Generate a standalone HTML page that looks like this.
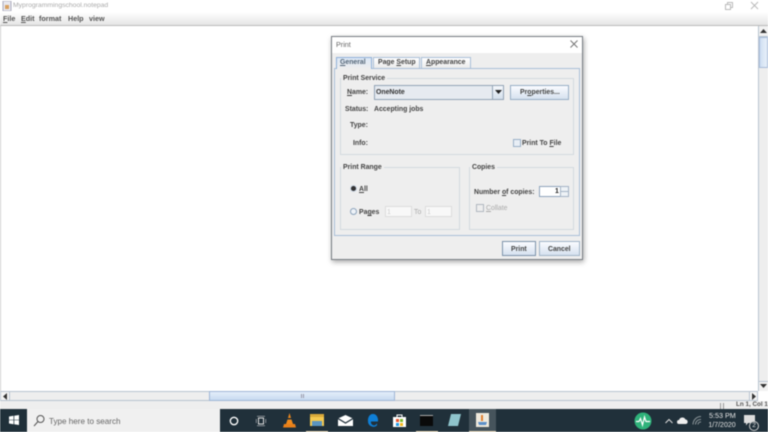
<!DOCTYPE html>
<html><head><meta charset="utf-8"><style>
html,body{margin:0;padding:0;width:768px;height:432px;overflow:hidden;background:#fff;font-family:"Liberation Sans",sans-serif}
#w{position:absolute;left:0;top:0;width:768px;height:432px;overflow:hidden;background:#fff;filter:blur(.4px)}
.a,.t{position:absolute;box-sizing:border-box}
.t{font-size:6.9px;line-height:10px;white-space:nowrap;color:#444;font-weight:bold}
#d .t{margin-top:1px}
.n{font-weight:normal}
.g{color:#aaa;font-weight:normal}
.grp{border:1px solid #d3dadf}
.leg{background:#eeeeee;padding:0 2px}
</style></head><body><div id="w">
<!-- title -->
<svg class="a" style="left:2px;top:1px" width="10" height="10"><rect x="1" y="0" width="8" height="10" fill="#e8e8ee" stroke="#aab"/><rect x="3" y="4" width="4" height="4" fill="#d8a060"/></svg>
<div class="t n" style="left:13px;top:1px;color:#aaa;font-size:6.8px">Myprogrammingschool.notepad</div>
<svg class="a" style="left:725px;top:2px" width="8" height="8"><path d="M.5 2.500h5v5h-5zM2.500 2.500v-2h5v5h-2" fill="none" stroke="#bbb"/></svg>
<svg class="a" style="left:750px;top:1px" width="9" height="9"><path d="M1 1l7 7M8 1l-7 7" stroke="#bbb" fill="none"/></svg>
<!-- menu -->
<div class="a" style="left:0;top:12px;width:768px;height:14px;background:linear-gradient(#fff,#e6e6e6);border-bottom:1px solid #bbb"></div>
<div class="t" style="left:3px;top:14px;color:#555;font-size:7.200px"><u>F</u>ile</div>
<div class="t" style="left:21px;top:14px;color:#555;font-size:7.200px"><u>E</u>dit</div>
<div class="t" style="left:39px;top:14px;color:#555;font-size:7.200px">format</div>
<div class="t" style="left:68px;top:14px;color:#555;font-size:7.200px">Help</div>
<div class="t" style="left:89px;top:14px;color:#555;font-size:7.200px">view</div>
<div class="a" style="left:0;top:26px;width:1px;height:365px;background:#d0d0d0"></div>
<!-- v scrollbar -->
<div class="a" style="left:758px;top:26px;width:10px;height:365px;background:#eeeeee;border-left:1px solid #b8c4d0"></div>
<div class="a" style="left:759px;top:27px;width:9px;height:10px;background:#f2f2f2;border-bottom:1px solid #b8c4d0"></div>
<svg class="a" style="left:760px;top:29px" width="7" height="5"><path d="M3.500 0L7 4H0z" fill="#333"/></svg>
<div class="a" style="left:759px;top:37px;width:9px;height:31px;background:linear-gradient(90deg,#cfdff2,#e8f0fa);border:1px solid #a8bcd8"></div>
<div class="a" style="left:759px;top:381px;width:9px;height:10px;background:#f2f2f2;border-top:1px solid #b8c4d0"></div>
<svg class="a" style="left:760px;top:384px" width="7" height="5"><path d="M0 0h7L3.500 4z" fill="#333"/></svg>
<!-- h scrollbar -->
<div class="a" style="left:0;top:391px;width:758px;height:10px;background:#eeeeee;border-top:1px solid #b8c4d0;border-bottom:1px solid #b8c4d0"></div>
<div class="a" style="left:0;top:391px;width:10px;height:10px;background:#f4f4f4;border:1px solid #b8c4d0"></div>
<svg class="a" style="left:3px;top:393px" width="5" height="7"><path d="M0 3.500L4 0v7z" fill="#333"/></svg>
<div class="a" style="left:209px;top:391px;width:186px;height:10px;background:linear-gradient(#e4eefa,#c8daf0);border:1px solid #9fb6d6"></div>
<div class="a" style="left:301px;top:394px;width:3px;height:4px;border-left:1px solid #99a;border-right:1px solid #99a"></div>
<div class="a" style="left:749px;top:391px;width:9px;height:10px;background:#f4f4f4;border:1px solid #b8c4d0"></div>
<svg class="a" style="left:752px;top:393px" width="5" height="7"><path d="M0 0l4 3.500L0 7z" fill="#333"/></svg>
<!-- status -->
<div class="a" style="left:0;top:401px;width:768px;height:8px;background:#eeeeee"></div>
<div class="a" style="left:720px;top:403px;width:4px;height:6px;border-left:1px solid #999;border-right:1px solid #999"></div>
<div class="t" style="left:736px;top:400px;color:#555;font-size:6.300px;line-height:10px">Ln 1, Col 1</div>
<!-- taskbar -->
<div class="a" style="left:0;top:409px;width:768px;height:23px;background:#20303a"></div>
<div class="a" style="left:27px;top:409px;width:193px;height:23px;background:#f0f0f0"></div>
<svg class="a" style="left:9px;top:415px" width="10" height="10"><path d="M0 1.500L4.500 .8V4.700H0zM5.200 .7L10 0V4.700H5.200zM0 5.300H4.500V9.200L0 8.500zM5.200 5.300H10V10L5.200 9.300z" fill="#fff"/></svg>
<svg class="a" style="left:33px;top:414px" width="12" height="13"><circle cx="7.500" cy="5" r="3.500" fill="none" stroke="#555"/><path d="M5 7.500L1 12" stroke="#555" fill="none"/></svg>
<div class="t n" style="left:49px;top:417px;font-size:8.100px;color:#666">Type here to search</div>
<svg class="a" style="left:229px;top:416px" width="10" height="10"><circle cx="5" cy="5" r="3.700" fill="none" stroke="#fff" stroke-width="1.300"/></svg>
<svg class="a" style="left:256px;top:416px" width="10" height="10"><path d="M2.500 2h5v6h-5zM0 3v4M10 3v4M1 0h8M1 10h8" fill="none" stroke="#ddd"/></svg>
<svg class="a" style="left:283px;top:413px" width="13" height="15"><path d="M6.500 0L8 5H5zM4.500 6.500h4L10 11H3z" fill="#f08a1c"/><path d="M1 11h11l1 3.500H0z" fill="#e8801a"/></svg>
<svg class="a" style="left:310px;top:414px" width="14" height="12"><rect width="14" height="12" fill="#f4c950"/><rect y="0" width="14" height="3" fill="#d8a93a"/><rect x="2" y="7" width="10" height="5" fill="#5b94c0"/></svg>
<svg class="a" style="left:338px;top:415px" width="15" height="11"><path d="M0 3.500L7.500 0L15 3.500V11H0z" fill="#fff"/><path d="M0 3.500L7.500 8L15 3.500" fill="none" stroke="#20303a" stroke-width="1.200"/></svg>
<svg class="a" style="left:367px;top:414px" width="12" height="13"><path d="M1 7a5 6 0 0 1 10-2v2.500H4a3 3 0 0 0 6 1.500v2.500a5.500 5.500 0 0 1-9-4.500z" fill="#0f7fd6"/></svg>
<svg class="a" style="left:393px;top:414px" width="13" height="13"><path d="M4 3V1h5v2" fill="none" stroke="#fff"/><rect y="3" width="13" height="10" fill="#fff"/><rect x="3" y="5" width="3" height="3" fill="#e8532b"/><rect x="7" y="5" width="3" height="3" fill="#7fba2c"/><rect x="3" y="9" width="3" height="3" fill="#1e9be8"/><rect x="7" y="9" width="3" height="3" fill="#f5b81c"/></svg>
<div class="a" style="left:420px;top:415px;width:13px;height:11px;background:#0a0a0a;border-top:1px solid #aaa"></div>
<svg class="a" style="left:448px;top:414px" width="13" height="13"><path d="M3 0h10l-3 12H0z" fill="#8fc4cc"/></svg>
<div class="a" style="left:469px;top:409px;width:27px;height:23px;background:#46545c"></div>
<div class="a" style="left:476px;top:413px;width:13px;height:14px;background:#efe9dc"></div>
<svg class="a" style="left:478px;top:415px" width="9" height="10"><path d="M4 0v6" stroke="#e08030" stroke-width="2"/><path d="M0 7h9l-1 3H1z" fill="#5c8fc8"/></svg>
<div class="a" style="left:306px;top:431px;width:22px;height:1px;background:#e8d8b8"></div>
<div class="a" style="left:416px;top:431px;width:22px;height:1px;background:#e8d8b8"></div>
<div class="a" style="left:469px;top:431px;width:27px;height:1px;background:#e8d8b8"></div>
<svg class="a" style="left:634px;top:412px" width="18" height="18"><circle cx="9" cy="9" r="8.500" fill="#2fb27a"/><path d="M2 9.500h3l1.500-3 2 6.500 2-8 1.500 4.500H16" fill="none" stroke="#fff" stroke-width="1.200"/></svg>
<svg class="a" style="left:665px;top:418px" width="8" height="6"><path d="M.5 5L4 1.500 7.500 5" fill="none" stroke="#ddd"/></svg>
<svg class="a" style="left:677px;top:417px" width="11" height="7"><path d="M2 7a2 2 0 0 1 0-4a3.500 3.500 0 0 1 6.500-.5a2.300 2.300 0 0 1 .5 4.500z" fill="#eee"/></svg>
<svg class="a" style="left:692px;top:416px" width="10" height="9"><path d="M1 8.500a8 8 0 0 1 8-8M3.500 8.500a5 5 0 0 1 5.500-5M6 8.500a2.500 2.500 0 0 1 3-2.500" fill="none" stroke="#8a9498"/></svg>
<div class="t n" style="left:709px;top:411px;color:#e4e4e4;font-size:7.200px;width:26px;text-align:center">5:53 PM</div>
<div class="t n" style="left:707px;top:421px;color:#e4e4e4;font-size:7px;width:30px;text-align:center">1/7/2020</div>
<svg class="a" style="left:744px;top:415px" width="12" height="11"><path d="M0 0h11v8H4l-2 2.500V8H0z" fill="#ddd"/></svg>
<div class="a" style="left:749px;top:421px;width:10px;height:10px;border-radius:50%;background:#20303a;border:1px solid #ccc;color:#eee;font-size:6.500px;line-height:8px;text-align:center">2</div>
<!-- dialog -->
<div class="a" style="left:331px;top:36px;width:252px;height:224px;background:#eeeeee;border:1px solid #777c82;box-shadow:1px 2px 5px rgba(0,0,0,.35)"></div>
<div class="a" style="left:332px;top:37px;width:250px;height:16px;background:#fff"></div>
<div class="t n" style="left:336px;top:40px;font-size:7.200px;color:#666">Print</div>
<svg class="a" style="left:570px;top:40px" width="8" height="8"><path d="M.5 .5l7 7M7.500 .5l-7 7" stroke="#777" fill="none"/></svg>
<div id="d">
<!-- tab panel -->
<div class="a" style="left:334px;top:68px;width:246px;height:168px;border:1.500px solid #a9bfd8;background:#eeeeee"></div>
<div class="a" style="left:336px;top:57px;width:36px;height:12px;background:linear-gradient(#dce8f6,#eeeeee);border:1px solid #8fb0d8;border-bottom:0"></div>
<div class="a" style="left:373px;top:57px;width:47px;height:11px;background:linear-gradient(#fff,#ececec);border:1px solid #a9bfd8;border-bottom:0"></div>
<div class="a" style="left:421px;top:57px;width:50px;height:11px;background:linear-gradient(#fff,#ececec);border:1px solid #a9bfd8;border-bottom:0"></div>
<div class="t" style="left:340px;top:57px;color:#567"><u>G</u>eneral</div>
<div class="t" style="left:378px;top:57px">Page <u>S</u>etup</div>
<div class="t" style="left:426px;top:57px"><u>A</u>ppearance</div>
<!-- print service -->
<div class="a grp" style="left:340px;top:78px;width:234px;height:77px"></div>
<div class="t leg" style="left:341px;top:73px">Print Service</div>
<div class="t" style="left:347px;top:87px"><u>N</u>ame:</div>
<div class="a" style="left:374px;top:85px;width:130px;height:15px;background:#e6eaf0;border:1px solid #93a4b6"></div>
<div class="t" style="left:376px;top:87px;color:#333">OneNote</div>
<div class="a" style="left:492px;top:85px;width:12px;height:15px;background:linear-gradient(#f5f8fc,#d4dfec);border:1px solid #93a4b6"></div>
<svg class="a" style="left:495px;top:90px" width="7" height="4"><path d="M0 0h7L3.500 4z" fill="#222"/></svg>
<div class="a" style="left:510px;top:85px;width:59px;height:15px;background:linear-gradient(#fafcff,#d6e2ef);border:1px solid #98aec6"></div>
<div class="t" style="left:520px;top:87px">Pr<u>o</u>perties...</div>
<div class="t" style="left:345px;top:104px">Status:</div>
<div class="t" style="left:374px;top:104px">Accepting jobs</div>
<div class="t" style="left:350px;top:120px">Type:</div>
<div class="t" style="left:353px;top:138px">Info:</div>
<div class="a" style="left:513px;top:139px;width:8px;height:8px;background:#e8eef5;border:1px solid #9ab0c8"></div>
<div class="t" style="left:522px;top:138px">Print To <u>F</u>ile</div>
<!-- print range -->
<div class="a grp" style="left:340px;top:167px;width:120px;height:63px"></div>
<div class="t leg" style="left:341px;top:162px">Print Range</div>
<div class="a" style="left:350px;top:185px;width:7px;height:7px;border-radius:50%;background:#333;border:1.500px solid #cdd8e4"></div>
<div class="t" style="left:359px;top:184px"><u>A</u>ll</div>
<div class="a" style="left:350px;top:208px;width:7px;height:7px;border-radius:50%;background:#eef3f8;border:1px solid #8ea4bc"></div>
<div class="t" style="left:359px;top:207px">Pa<u>g</u>es</div>
<div class="a" style="left:385px;top:206px;width:27px;height:11px;background:#f8f8f8;border:1px solid #ddd"></div>
<div class="t g" style="left:387px;top:207px;color:#ccc">1</div>
<div class="t g" style="left:414px;top:207px">To</div>
<div class="a" style="left:425px;top:206px;width:27px;height:11px;background:#f8f8f8;border:1px solid #ddd"></div>
<div class="t g" style="left:427px;top:207px;color:#ccc">1</div>
<!-- copies -->
<div class="a grp" style="left:469px;top:167px;width:105px;height:63px"></div>
<div class="t leg" style="left:470px;top:162px">Copies</div>
<div class="t" style="left:474px;top:187px">Number <u>o</u>f copies:</div>
<div class="a" style="left:539px;top:186px;width:30px;height:11px;background:#fff;border:1px solid #8ea4bc"></div>
<div class="t" style="left:555px;top:186px;color:#222">1</div>
<div class="a" style="left:560px;top:186px;width:9px;height:11px;background:#eef2f6;border:1px solid #a4b4c6"></div>
<div class="a" style="left:560px;top:191px;width:9px;height:1px;background:#a4b4c6"></div>
<div class="a" style="left:476px;top:204px;width:8px;height:8px;background:#eeeeee;border:1px solid #b0b8c0"></div>
<div class="t g" style="left:486px;top:203px"><u>C</u>ollate</div>
<!-- buttons -->
<div class="a" style="left:502px;top:241px;width:34px;height:15px;background:linear-gradient(#fafcff,#d6e2ef);border:1.500px solid #7d93ab"></div>
<div class="t" style="left:511px;top:244px">Print</div>
<div class="a" style="left:539px;top:241px;width:41px;height:15px;background:linear-gradient(#fafcff,#d6e2ef);border:1px solid #a0b4c8"></div>
<div class="t" style="left:548px;top:244px">Cancel</div>
</div>
</div></body></html>
